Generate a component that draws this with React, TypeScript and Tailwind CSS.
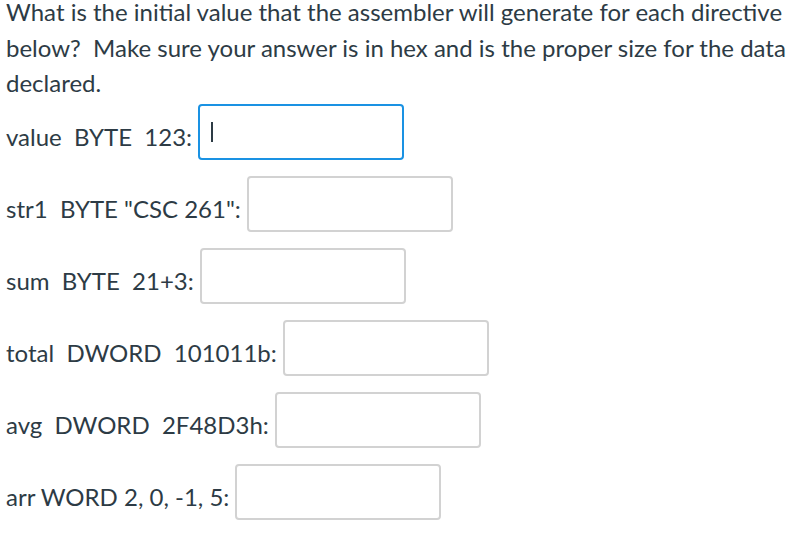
import React from "react";

const rows = [
  { label: "value  BYTE  123:", focused: true },
  { label: "str1  BYTE \"CSC 261\":" },
  { label: "sum  BYTE  21+3:" },
  { label: "total  DWORD  101011b:" },
  { label: "avg  DWORD  2F48D3h:" },
  { label: "arr WORD 2, 0, -1, 5:" },
];

export default function App() {
  return (
    <div className="bg-white min-h-screen pl-[6px] font-['Lato','Open_Sans',sans-serif] text-[24px] text-[#2d3b45]">
      <p className="leading-[35.5px] -mt-[6px] mb-[3px] pr-2">
        What is the initial value that the assembler will generate for each directive below?&nbsp; Make sure your
        answer is in hex and is the proper size for the data declared.
      </p>
      <div className="flex flex-col gap-4">
        {rows.map((row, i) => (
          <div key={i} className="flex items-center">
            <span className="whitespace-pre pt-[10px]">{row.label}</span>
            <div
              className={
                row.focused
                  ? "relative ml-[6px] w-[206px] h-[56px] rounded-[4px] border-2 border-[#1a92e3]"
                  : "relative ml-[6px] w-[206px] h-[56px] rounded-[4px] border-2 border-[#d2d2d2]"
              }
            >
              {row.focused && <span className="absolute left-[11px] top-[16px] w-[2px] h-[20px] bg-[#2d3b45]" />}
            </div>
          </div>
        ))}
      </div>
    </div>
  );
}
